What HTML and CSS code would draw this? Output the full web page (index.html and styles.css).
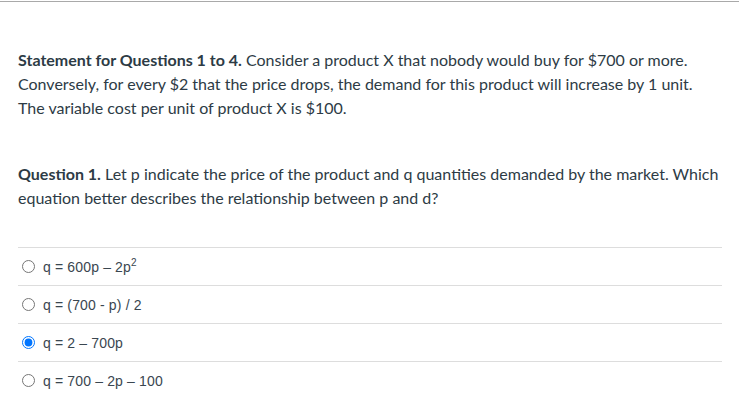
FILE: index.html
```html
<!DOCTYPE html>
<html lang="en">
<head>
<meta charset="utf-8">
<title>Question 1</title>
<link rel="stylesheet" href="styles.css">
</head>
<body>
<div class="page">
  <div class="topbar"></div>
  <div class="content">
    <p class="statement"><strong>Statement for Questions 1 to 4.</strong> Consider a product X that nobody would buy for $700 or more. Conversely, for every $2 that the price drops, the demand for this product will increase by 1 unit. The variable cost per unit of product X is $100.</p>
    <p class="question"><strong>Question 1.</strong> Let p indicate the price of the product and q quantities demanded by the market. Which equation better describes the relationship between p and d?</p>
    <div class="answers">
      <label class="answer"><input type="radio" name="q1"><span>q = 600p – 2p<sup>2</sup></span></label>
      <label class="answer"><input type="radio" name="q1"><span>q = (700 - p) / 2</span></label>
      <label class="answer"><input type="radio" name="q1" checked><span>q = 2 – 700p</span></label>
      <label class="answer"><input type="radio" name="q1"><span>q = 700 – 2p – 100</span></label>
    </div>
  </div>
</div>
</body>
</html>
```

FILE: styles.css
```css
html, body {
  margin: 0;
  padding: 0;
  background: #ffffff;
}

.page {
  font-family: Lato, "Liberation Sans", sans-serif;
  color: #2d3b45;
}

.topbar {
  margin-top: 1px;
  height: 1px;
  background: #a9a9a9;
}

.content {
  padding: 46px 17px 0 18px;
}

.statement,
.question {
  margin: 0;
  font-size: 16px;
  line-height: 24px;
}

.statement strong,
.question strong {
  font-weight: 700;
}

.question {
  margin-top: 42px;
}

.answers {
  margin-top: 37px;
  display: flex;
  flex-direction: column;
}

.answer {
  display: flex;
  align-items: center;
  gap: 8px;
  height: 37px;
  border-top: 1px solid #dddddd;
  padding-left: 4px;
  font-family: "Liberation Sans", Arial, sans-serif;
  font-size: 14px;
  letter-spacing: 0.15px;
  color: #3a4650;
}

.answer input {
  margin: 0;
  width: 13px;
  height: 13px;
}

.answer sup {
  font-size: 10px;
  line-height: 0;
}
```
